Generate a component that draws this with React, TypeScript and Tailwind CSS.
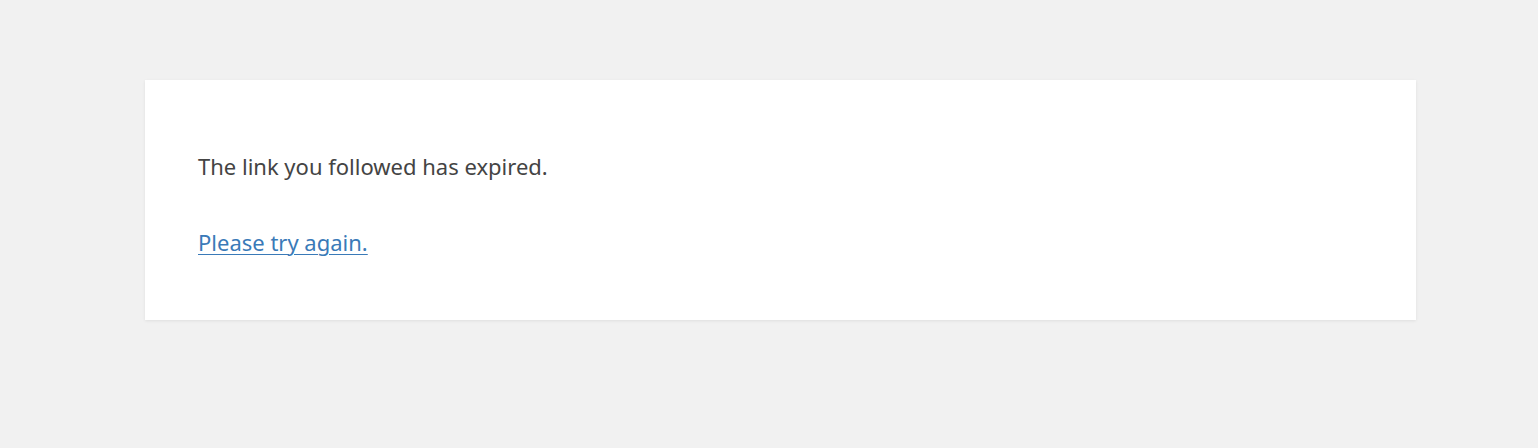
export default function App() {
  return (
    <div className="min-h-[448px] bg-[#f1f1f1] pt-[80px] pb-[20px]" style={{ fontFamily: '"Noto Sans", "Open Sans", sans-serif' }}>
      <div className="ml-[145px] w-[1271px] bg-white px-[53px] pt-[70px] pb-[62px] text-[22px] leading-[32px] text-[#444] shadow-[0_1px_3px_rgba(0,0,0,0.08)]">
        <p>The link you followed has expired.</p>
        <p className="mt-[44px]">
          <a href="#" className="text-[#3a7ab8] underline underline-offset-[3px] decoration-1">
            Please try again.
          </a>
        </p>
      </div>
    </div>
  );
}
